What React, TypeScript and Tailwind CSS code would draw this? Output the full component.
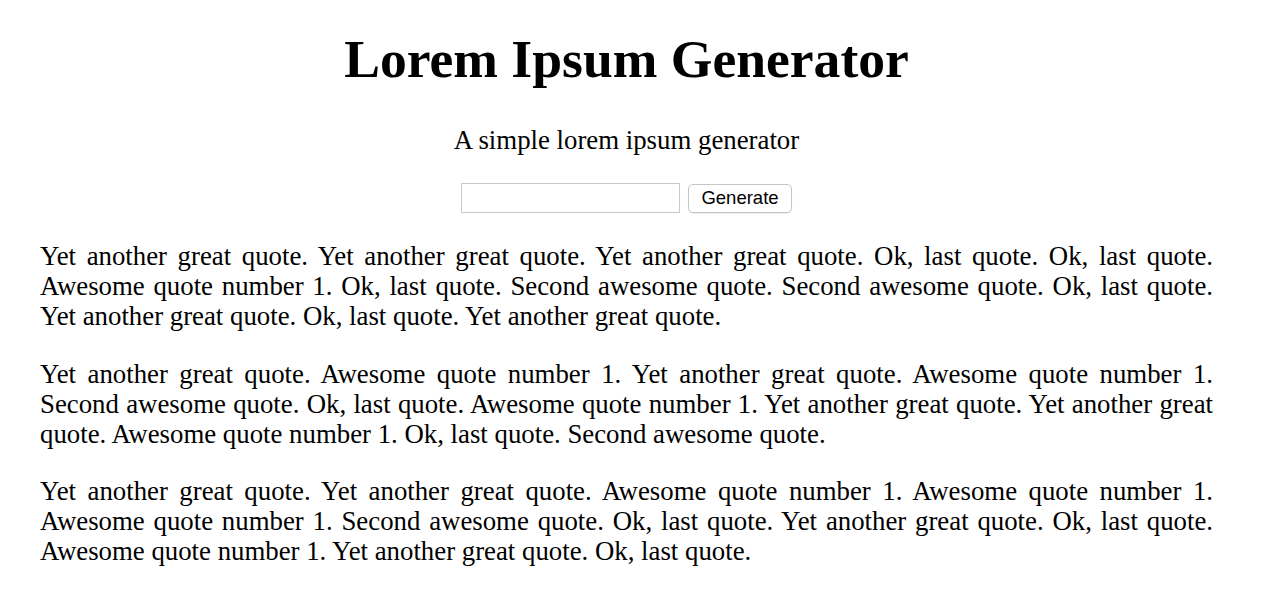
import React, { useState } from 'react'

const quotes = [
  'Yet another great quote. Yet another great quote. Yet another great quote. Ok, last quote. Ok, last quote. Awesome quote number 1. Ok, last quote. Second awesome quote. Second awesome quote. Ok, last quote. Yet another great quote. Ok, last quote. Yet another great quote.',
  'Yet another great quote. Awesome quote number 1. Yet another great quote. Awesome quote number 1. Second awesome quote. Ok, last quote. Awesome quote number 1. Yet another great quote. Yet another great quote. Awesome quote number 1. Ok, last quote. Second awesome quote.',
  'Yet another great quote. Yet another great quote. Awesome quote number 1. Awesome quote number 1. Awesome quote number 1. Second awesome quote. Ok, last quote. Yet another great quote. Ok, last quote. Awesome quote number 1. Yet another great quote. Ok, last quote.',
]

export default function App() {
  const [count, setCount] = useState('')

  return (
    <div className="min-h-screen bg-white text-black font-['Liberation_Serif',serif] pl-[40px] pr-[67px] pt-[27px]">
      <h1 className="text-center text-[53.6px] font-bold leading-[64px]">Lorem Ipsum Generator</h1>

      <p className="text-center text-[26.8px] leading-[30px] mt-[34px]">A simple lorem ipsum generator</p>

      {/* number input + button */}
      <div className="flex justify-center items-center gap-[8px] mt-[28px]">
        <input
          type="text"
          value={count}
          onChange={(e) => setCount(e.target.value)}
          className="w-[219px] h-[30px] border border-[#c8c8c8] bg-white px-1 outline-none"
        />
        <button className="h-[29px] px-[12px] rounded-[5px] border border-[#c6c6c6] bg-white text-[18.5px] font-['Liberation_Sans',sans-serif] leading-none shadow-[0_1px_1px_rgba(0,0,0,0.08)]">
          Generate
        </button>
      </div>

      <div className="mt-[28px]">
        {quotes.map((q, i) => (
          <p key={i} className="text-justify text-[26.8px] leading-[30px] mb-[27.5px]">
            {q}
          </p>
        ))}
      </div>
    </div>
  )
}
